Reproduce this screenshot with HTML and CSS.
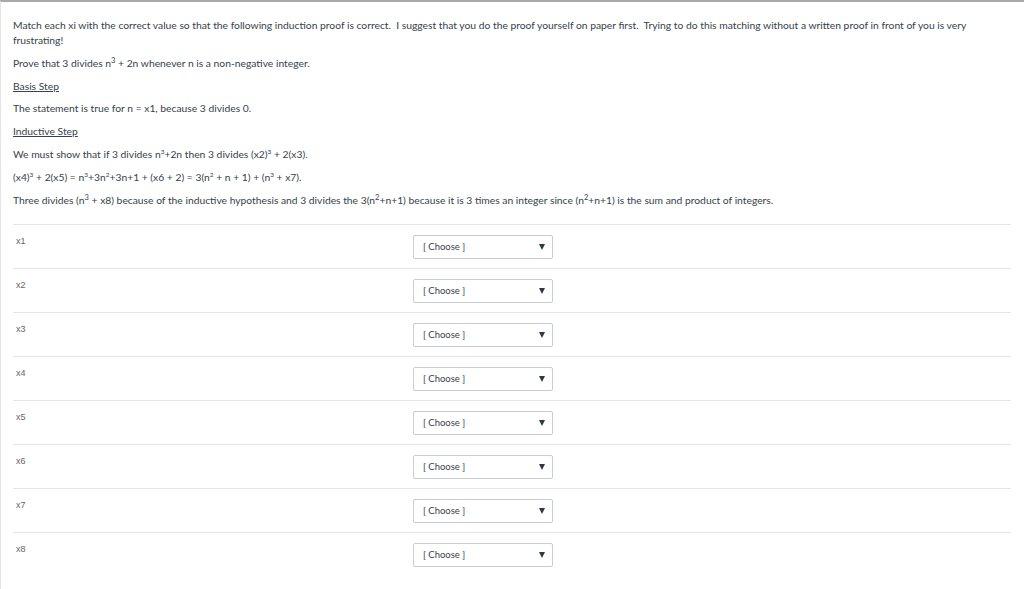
FILE: index.html
```html
<!DOCTYPE html>
<html>
<head>
<meta charset="utf-8">
<link rel="stylesheet" href="styles.css">
</head>
<body>
<div class="page">
  <div class="question">
    <p>Match each xi with the correct value so that the following induction proof is correct.&nbsp; I suggest that you do the proof yourself on paper first.&nbsp; Trying to do this matching without a written proof in front of you is very frustrating!</p>
    <p>Prove that 3 divides n<sup>3</sup> + 2n whenever n is a non-negative integer.</p>
    <p><u>Basis Step</u></p>
    <p>The statement is true for n = x1, because 3 divides 0.</p>
    <p><u>Inductive Step</u></p>
    <p>We must show that if 3 divides n<sup class="s">3</sup>+2n then 3 divides (x2)<sup class="s">3</sup> + 2(x3).</p>
    <p>(x4)<sup class="s">3</sup> + 2(x5) = n<sup class="s">3</sup>+3n<sup class="s">2</sup>+3n+1 + (x6 + 2) = 3(n<sup class="s">2</sup> + n + 1) + (n<sup class="s">3</sup> + x7).</p>
    <p>Three divides (n<sup>3</sup> + x8) because of the inductive hypothesis and 3 divides the 3(n<sup>2</sup>+n+1) because it is 3 times an integer since (n<sup>2</sup>+n+1) is the sum and product of integers.</p>
  </div>
  <div class="answers">
    <div class="row"><div class="label">x1</div><div class="select"><span>[ Choose ]</span><i class="caret"></i></div></div>
    <div class="row"><div class="label">x2</div><div class="select"><span>[ Choose ]</span><i class="caret"></i></div></div>
    <div class="row"><div class="label">x3</div><div class="select"><span>[ Choose ]</span><i class="caret"></i></div></div>
    <div class="row"><div class="label">x4</div><div class="select"><span>[ Choose ]</span><i class="caret"></i></div></div>
    <div class="row"><div class="label">x5</div><div class="select"><span>[ Choose ]</span><i class="caret"></i></div></div>
    <div class="row"><div class="label">x6</div><div class="select"><span>[ Choose ]</span><i class="caret"></i></div></div>
    <div class="row"><div class="label">x7</div><div class="select"><span>[ Choose ]</span><i class="caret"></i></div></div>
    <div class="row"><div class="label">x8</div><div class="select"><span>[ Choose ]</span><i class="caret"></i></div></div>
  </div>
</div>
</body>
</html>
```
FILE: styles.css
```css
html, body {
  margin: 0;
  padding: 0;
  background: #fff;
}
.page {
  font-family: Lato, "Liberation Sans", sans-serif;
  color: #35424b;
  border-top: 2px solid #a9a9a9;
  border-left: 1px solid #e4e4e4;
  min-height: 600px;
  box-sizing: border-box;
  padding: 16px 13px 0 12px;
}
.question p {
  margin: 0 0 7.8px 0;
  font-size: 10.3px;
  line-height: 15px;
  padding-right: 40px;
}
sup {
  font-size: 7.5px;
  line-height: 0;
  vertical-align: 4px;
}
sup.s {
  font-size: 6.5px;
}
.answers {
  margin-top: 16px;
}
.row {
  display: flex;
  border-top: 1px solid #e6e6e6;
  height: 44px;
  box-sizing: border-box;
}
.label {
  width: 397px;
  padding: 11px 0 0 3px;
  font-family: "Liberation Sans", Arial, sans-serif;
  font-size: 9px;
  color: #666;
}
.select {
  margin-top: 10px;
  width: 140px;
  height: 24px;
  box-sizing: border-box;
  border: 1px solid #c7cdd1;
  border-radius: 2px;
  display: flex;
  align-items: center;
  justify-content: space-between;
  padding: 0 7px 0 9px;
  font-size: 9.5px;
  color: #35424b;
}
.caret {
  width: 0;
  height: 0;
  border-left: 3px solid transparent;
  border-right: 3px solid transparent;
  border-top: 6px solid #2d3b45;
}
```
